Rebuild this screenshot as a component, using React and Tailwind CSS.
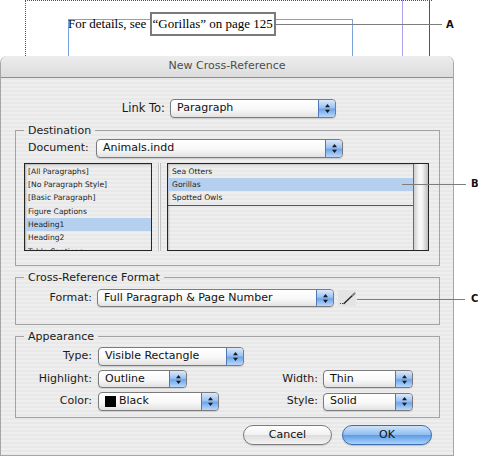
import React from 'react';

// Blue aqua stepper that sits on the right end of every popup menu
const Stepper = () => (
  <span className="flex w-[17px] shrink-0 items-center justify-center rounded-r-[3px] border-l border-[#4f78b4] bg-[linear-gradient(180deg,#dce9fb_0%,#9cc2f1_45%,#6fa5ea_55%,#b9d8fb_100%)]">
    <svg width="5" height="9" viewBox="0 0 5 9">
      <path d="M2.5 0L5 3.2H0z M0 5.8h5L2.5 9z" fill="#1b1b1b" />
    </svg>
  </span>
);

const Popup = ({ className, children }) => (
  <div
    className={`flex overflow-hidden rounded-[4px] border border-[#7b7b7b] bg-[linear-gradient(180deg,#ffffff_0%,#f8f8f8_55%,#e2e2e2_100%)] shadow-[0_1px_1px_rgba(0,0,0,0.12)] ${className}`}
  >
    <span className="flex flex-1 items-center gap-[3px] whitespace-nowrap pl-[6px] text-[11px] text-[#111]">
      {children}
    </span>
    <Stepper />
  </div>
);

const Group = ({ title, className, children }) => (
  <fieldset className={`border border-[#a3a3a3] ${className}`}>
    <legend className="ml-[8px] px-[4px] text-[11px] leading-[13px] text-[#1a1a1a]">{title}</legend>
    {children}
  </fieldset>
);

const paragraphStyles = [
  '[All Paragraphs]',
  '[No Paragraph Style]',
  '[Basic Paragraph]',
  'Figure Captions',
  'Heading1',
  'Heading2',
  'Table Captions',
];

const destinations = ['Sea Otters', 'Gorillas', 'Spotted Owls'];

const Row = ({ label, selected, className }) => (
  <div
    className={`flex h-[13.4px] shrink-0 items-center whitespace-nowrap text-[7.6px] text-[#222] ${
      selected ? 'bg-[#b5d0ef]' : ''
    } ${className}`}
  >
    {label}
  </div>
);

const Callout = ({ letter, lineClass, letterClass }) => (
  <>
    <div className={`absolute h-px bg-[#7d7d7d] ${lineClass}`} />
    <span className={`absolute text-[10px] font-bold leading-[12px] text-[#111] ${letterClass}`}>{letter}</span>
  </>
);

export default function App() {
  return (
    <div className="relative h-[458px] w-[478px] overflow-hidden bg-white font-['DejaVu_Sans',sans-serif]">
      {/* page behind the dialog */}
      <div className="relative h-[56px]">
        <div className="absolute left-[25px] top-0 w-[407px] border-t border-dotted border-[#555]" />
        <div className="absolute left-[25px] top-0 h-[56px] border-l border-dotted border-[#555]" />
        <div className="absolute left-[68px] top-[19px] h-[37px] w-[285px] border-x border-t border-[#7ba3e0]" />
        <div className="absolute left-[402px] top-0 h-[56px] w-px bg-[#aaa3ec]" />
        <div className="absolute left-[429px] top-0 h-[56px] w-px bg-[#555]" />
        <p className="relative pl-[68px] pt-[14px] font-['Liberation_Serif',serif] text-[13px] leading-[20px] text-black">
          For details, see{' '}
          <span className="border-2 border-[#7a7a7a] bg-white px-[1px] pb-[3px] pt-[2px]">“Gorillas” on page 125</span>
        </p>
      </div>

      {/* dialog */}
      <div className="h-[400px] w-[454px] rounded-t-[7px] border-x border-b border-[#a6a6a6] bg-[repeating-linear-gradient(180deg,#eeeeee_0px,#eeeeee_2px,#e8e8e8_2px,#e8e8e8_4px)]">
        <div className="flex h-[22px] items-center justify-center rounded-t-[7px] border-b border-[#8e8e8e] bg-[linear-gradient(180deg,#ededed_0%,#dcdcdc_100%)] text-[11px] text-[#4d4d4d]">
          New Cross-Reference
        </div>

        <div className="px-[14px]">
          <div className="mt-[21px] flex items-center">
            <span className="w-[150px] text-right text-[11.5px] text-[#1a1a1a]">Link To:</span>
            <Popup className="ml-[5px] h-[19px] w-[166px]">Paragraph</Popup>
          </div>

          <Group title="Destination" className="mt-[6px] w-[425px] pb-[14px]">
            <div className="mt-[2px] flex items-center pl-[12px]">
              <span className="w-[61px] whitespace-nowrap text-[11px] text-[#1a1a1a]">Document:</span>
              <Popup className="ml-[7px] h-[19px] w-[247px]">Animals.indd</Popup>
            </div>

            <div className="mt-[5px] flex h-[88px] pl-[8px]">
              <div className="flex w-[128px] flex-col overflow-hidden border border-[#262626] pl-[1px] pt-[0.5px] shadow-[inset_1px_1px_2px_rgba(0,0,0,0.25)]">
                {paragraphStyles.map((s) => (
                  <Row key={s} label={s} selected={s === 'Heading1'} className="pl-[2px]" />
                ))}
              </div>
              <div className="mx-[6px] w-[3px] border-x border-[#c4c4c4] bg-[#f6f6f6]" />
              <div className="flex w-[262px] border border-[#262626]">
                <div className="flex-1 shadow-[inset_1px_1px_2px_rgba(0,0,0,0.2)]">
                  <div className="border-b border-[#555] pt-[0.5px]">
                    {destinations.map((d) => (
                      <Row key={d} label={d} selected={d === 'Gorillas'} className="pl-[4px]" />
                    ))}
                  </div>
                </div>
                <div className="w-[15px] border-l border-[#6b6b6b] bg-[linear-gradient(90deg,#cfcfcf_0%,#fafafa_40%,#f2f2f2_60%,#bdbdbd_100%)]" />
              </div>
            </div>
          </Group>

          <Group title="Cross-Reference Format" className="mt-[5px] w-[425px] pb-[17px]">
            <div className="mt-[5px] flex items-center">
              <span className="w-[76px] text-right text-[11px] text-[#1a1a1a]">Format:</span>
              <Popup className="ml-[5px] h-[18px] w-[237px]">Full Paragraph &amp; Page Number</Popup>
              <span className="ml-[4px] flex h-[16px] w-[18px] items-center justify-center bg-[#e4e4e4]">
                <svg width="17" height="13" viewBox="0 0 17 13">
                  <path d="M1 11.5h4" stroke="#444" strokeWidth="1" strokeDasharray="1 1" />
                  <path d="M5 11.5L15 2" stroke="#222" strokeWidth="1.4" strokeLinecap="round" />
                  <path d="M13.5 3.4L15.6 1.4" stroke="#888" strokeWidth="2" strokeLinecap="round" />
                </svg>
              </span>
            </div>
          </Group>

          <Group title="Appearance" className="mt-[5px] w-[425px] pb-[6px]">
            <div className="mt-[4px] flex flex-col gap-[4px] pr-[26px] text-[11px] text-[#1a1a1a]">
              <div className="flex h-[19px] items-center">
                <span className="w-[76px] text-right">Type:</span>
                <Popup className="ml-[6px] h-[19px] w-[146px]">Visible Rectangle</Popup>
              </div>
              <div className="flex h-[18px] items-center">
                <span className="w-[76px] text-right">Highlight:</span>
                <Popup className="ml-[6px] h-[18px] w-[89px]">Outline</Popup>
                <span className="ml-auto">Width:</span>
                <Popup className="ml-[5px] h-[18px] w-[90px]">Thin</Popup>
              </div>
              <div className="flex h-[19px] items-center">
                <span className="w-[76px] text-right">Color:</span>
                <Popup className="ml-[6px] h-[19px] w-[121px]">
                  <span className="h-[11px] w-[11px] bg-black" />
                  Black
                </Popup>
                <span className="ml-auto">Style:</span>
                <Popup className="ml-[5px] h-[18px] w-[90px]">Solid</Popup>
              </div>
            </div>
          </Group>

          <div className="mt-[7px] flex justify-end gap-[10px] pr-[7px] text-[11px]">
            <button className="h-[20px] w-[89px] rounded-full border border-[#7c7c7c] bg-[linear-gradient(180deg,#ffffff_0%,#f1f1f1_50%,#dcdcdc_51%,#f4f4f4_100%)] text-[#111] shadow-[0_1px_1px_rgba(0,0,0,0.15)]">
              Cancel
            </button>
            <button className="h-[20px] w-[90px] rounded-full border border-[#3f6eae] bg-[linear-gradient(180deg,#cfe3fb_0%,#8ebcf0_50%,#5d9ae6_51%,#a9d3fb_100%)] text-[#111] shadow-[0_1px_1px_rgba(0,0,0,0.2)]">
              OK
            </button>
          </div>
        </div>
      </div>

      {/* callouts */}
      <Callout letter="A" lineClass="left-[276px] top-[24px] w-[166px]" letterClass="left-[446px] top-[19px]" />
      <Callout letter="B" lineClass="left-[402px] top-[184px] w-[64px]" letterClass="left-[471px] top-[178px]" />
      <Callout letter="C" lineClass="left-[357px] top-[299px] w-[108px]" letterClass="left-[471px] top-[293px]" />
    </div>
  );
}
